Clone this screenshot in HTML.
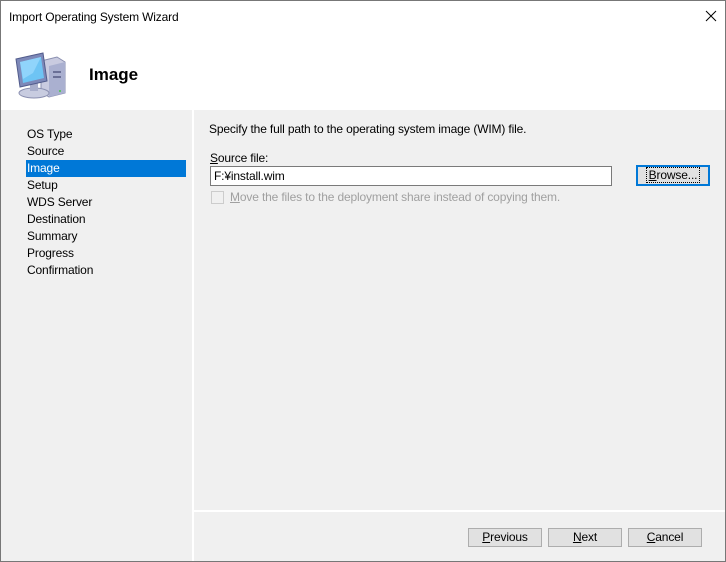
<!DOCTYPE html>
<html><head><meta charset="utf-8"><style>
*{margin:0;padding:0;box-sizing:border-box}
body{width:726px;height:562px;overflow:hidden;background:#fff;font-family:"Liberation Sans","Noto Sans CJK JP",sans-serif;font-size:12px;color:#000;position:relative;letter-spacing:-0.15px}
.win{position:absolute;left:0;top:0;width:726px;height:562px;border:1px solid #777;background:#fff}
.a{position:absolute}
.title{left:8px;top:9px;font-size:12px}
.close{left:703px;top:8px;width:14px;height:14px}
.hdr{left:88px;top:64px;font-size:17px;font-weight:bold;letter-spacing:0}
.gray{left:0;top:109px;width:724px;height:451px;background:#f0f0f0}
.vl{left:191px;top:109px;width:2px;height:451px;background:#fff}
.hl{left:193px;top:509px;width:531px;height:2px;background:#fff}
.nav{left:25px;top:125px;line-height:17px}
.nav div{padding-left:1px;width:160px;height:17px}
.sel{background:#0078d7;color:#fff}
.btn{position:absolute;height:19px;border:1px solid #adadad;background:#e1e1e1;text-align:center;line-height:17px;font-size:12px}
u{text-decoration:underline}
</style></head><body>
<div class="win">
<div class="a title">Import Operating System Wizard</div>
<svg class="a close" viewBox="0 0 14 14"><path d="M2 2L12 12M12 2L2 12" stroke="#000" stroke-width="1"/></svg>
<svg class="a" style="left:12px;top:46px" width="56" height="56" viewBox="0 0 56 52">
<polygon points="28,12 44,8 52,13 52,44 36,48 28,43" fill="#c9cbe0" stroke="#8a8fb0"/>
<polygon points="36,17 52,13 52,44 36,48" fill="#aab0d0"/>
<rect x="40" y="22" width="8" height="2" fill="#6a6f96"/>
<rect x="40" y="27" width="8" height="2" fill="#6a6f96"/>
<circle cx="47" cy="42" r="1" fill="#4c4"/>
<ellipse cx="21" cy="44" rx="15" ry="5" fill="#c8cce0" stroke="#8a8fb0"/>
<rect x="17" y="34" width="8" height="8" fill="#a8aecb"/>
<polygon points="3,10 30,4 34,32 7,38" fill="#7d88b8" stroke="#525c8c"/>
<polygon points="7,13 28,8 31,29 10,34" fill="#6ec4f4"/>
<polygon points="7,13 28,8 20,24 10,30" fill="#a6e0ff" opacity=".6"/>
</svg>
<div class="a hdr">Image</div>
<div class="a gray"></div>
<div class="a vl"></div>
<div class="a hl"></div>
<div class="a nav">
<div>OS Type</div><div>Source</div><div class="sel">Image</div><div>Setup</div><div>WDS Server</div><div>Destination</div><div>Summary</div><div>Progress</div><div>Confirmation</div>
</div>
<div class="a" style="left:208px;top:121px">Specify the full path to the operating system image (WIM) file.</div>
<div class="a" style="left:209px;top:150px"><u>S</u>ource file:</div>
<div class="a" style="left:209px;top:165px;width:402px;height:20px;border:1px solid #7a7a7a;background:#fff;padding-left:3px;line-height:18px">F:¥install.wim</div>
<div class="btn" style="left:635px;top:164px;width:74px;height:21px;border:2px solid #0078d7;line-height:16px"><span style="border:1px dotted #000;padding:0 2px"><u>B</u>rowse...</span></div>
<div class="a" style="left:210px;top:190px;width:13px;height:13px;border:1px solid #ccc;background:#f0f0f0"></div>
<div class="a" style="left:229px;top:189px;color:#a0a0a0"><u>M</u>ove the files to the deployment share instead of copying them.</div>
<div class="btn" style="left:467px;top:527px;width:74px"><u>P</u>revious</div>
<div class="btn" style="left:547px;top:527px;width:74px"><u>N</u>ext</div>
<div class="btn" style="left:627px;top:527px;width:74px"><u>C</u>ancel</div>
</div>
</body></html>
